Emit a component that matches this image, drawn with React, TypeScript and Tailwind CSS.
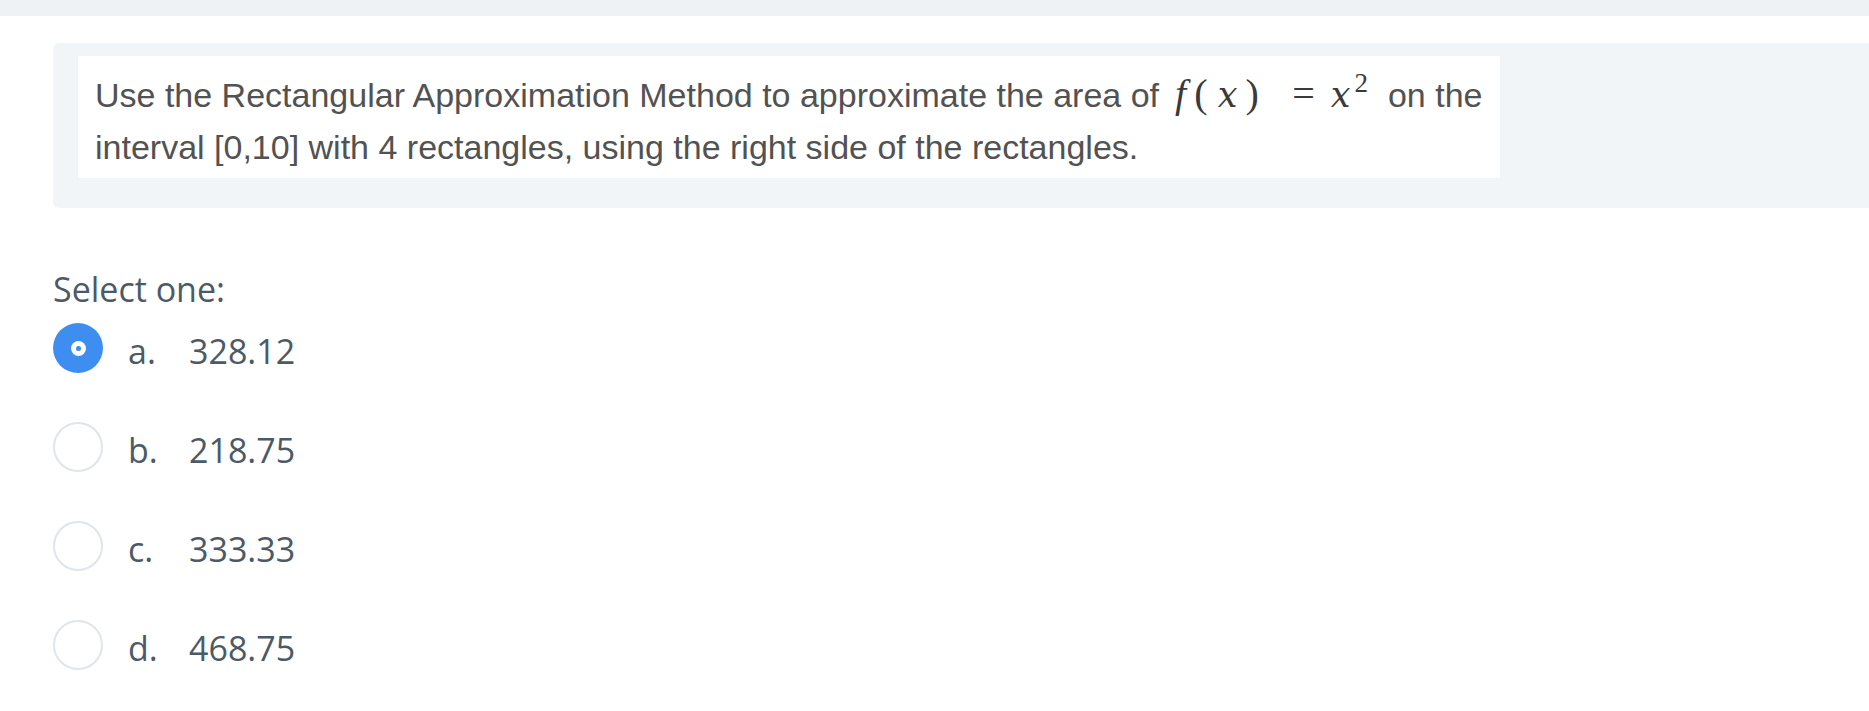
import React from "react";

function MathExpr() {
  return (
    <span className="font-['Liberation_Serif',serif] text-[40px] text-[#3a3a3a] leading-none">
      <span className="inline-block w-[24px] italic text-center">f</span>
      <span className="inline-block w-[17px] text-center">(</span>
      <span className="inline-block w-[36px] italic text-center font-['DejaVu_Serif',serif] text-[35px]">x</span>
      <span className="inline-block w-[16px] text-left">)</span>
      <span className="inline-block w-[28px] ml-[28px] mr-[9px] text-center">=</span>
      <span className="inline-block w-[28px] italic text-center font-['DejaVu_Serif',serif] text-[35px]">x</span>
      <span className="inline-block w-[24px] text-[27px] align-[15px] text-left">2</span>
    </span>
  );
}

function Radio({ selected }: { selected?: boolean }) {
  if (selected) {
    return (
      <div className="w-[50px] h-[50px] shrink-0 rounded-full bg-[#3e8ef2] flex items-center justify-center">
        <div className="w-[15px] h-[15px] rounded-full bg-white flex items-center justify-center">
          <div className="w-[5px] h-[5px] rounded-full bg-[#3e8ef2]" />
        </div>
      </div>
    );
  }
  return <div className="w-[50px] h-[50px] shrink-0 rounded-full border-2 border-[#dfe5ea] bg-white" />;
}

const options = [
  { label: "a.", value: "328.12", selected: true },
  { label: "b.", value: "218.75" },
  { label: "c.", value: "333.33" },
  { label: "d.", value: "468.75" },
];

export default function App() {
  return (
    <div className="min-h-screen w-full bg-white overflow-hidden">
      <div className="h-[16px] bg-[#eef2f4]" />
      <div className="pl-[53px] pt-[27px]">
        <div className="rounded-l-[6px] bg-[#f2f5f8] pl-[25px] pt-[13px] pb-[30px]">
          <div className="w-[1422px] h-[122px] bg-white pl-[17px] pt-[13px] font-['Liberation_Sans',Arial,sans-serif] text-[34px] leading-[52px] text-[#525252]">
            Use the Rectangular Approximation Method to approximate the area of <MathExpr /> on the
            <br />
            interval [0,10] with 4 rectangles, using the right side of the rectangles.
          </div>
        </div>
        <div className="mt-[56px] font-['Open_Sans',sans-serif] text-[34px] leading-[50px] text-[#4c5a66]">
          Select one:
        </div>
        <div className="mt-[9px] flex flex-col gap-[49px] font-['Open_Sans',sans-serif] text-[34px] leading-[50px] text-[#4c5a66]">
          {options.map((o) => (
            <div key={o.label} className="flex items-center h-[50px]">
              <Radio selected={o.selected} />
              <span className="ml-[25px] w-[61px] pt-[6px]">{o.label}</span>
              <span className="pt-[6px]">{o.value}</span>
            </div>
          ))}
        </div>
      </div>
    </div>
  );
}
